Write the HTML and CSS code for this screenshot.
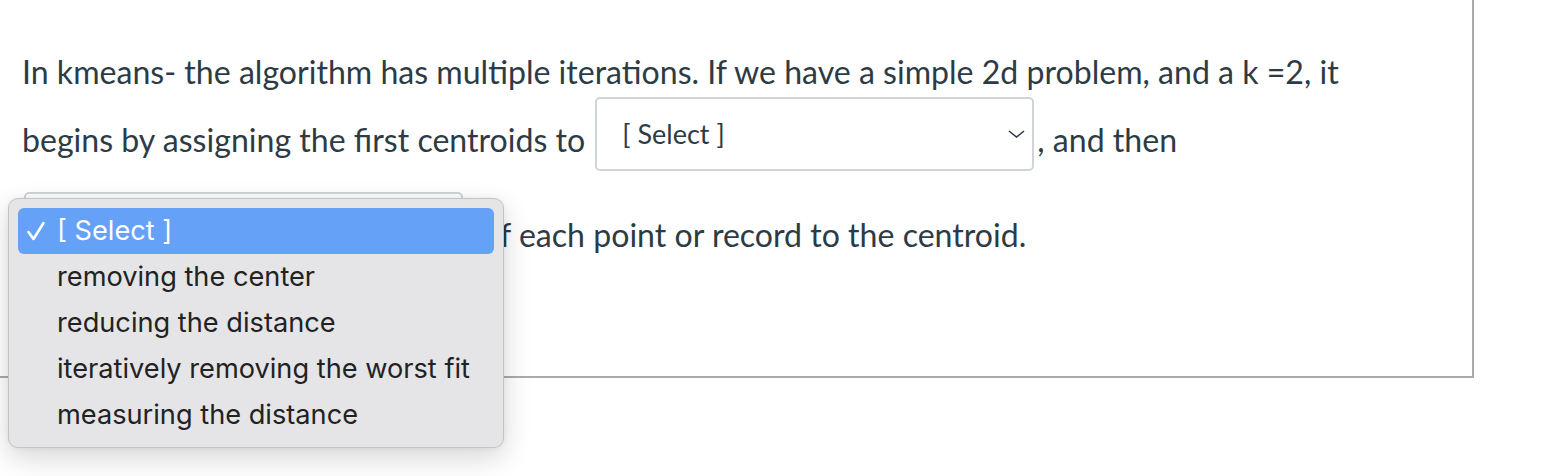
FILE: index.html
```html
<!DOCTYPE html>
<html lang="en">
<head>
<meta charset="utf-8">
<title>Quiz question</title>
<link rel="stylesheet" href="styles.css">
</head>
<body>
<div class="page">
  <div class="panel">
    <p class="question">In kmeans- the algorithm has multiple iterations. If we have a simple 2d problem, and a k =2, it begins by assigning the first centroids to <span class="select"><span class="select-inner"><span class="select-value">[ Select ]</span><svg class="chevron" viewBox="0 0 17 8" width="17" height="8"><polyline points="1,1 8.5,7 16,1" fill="none" stroke="#2d3b45" stroke-width="1.6"/></svg></span></span>, and then <span class="select select-open"><span class="select-inner"><span class="select-value">[ Select ]</span><svg class="chevron" viewBox="0 0 17 8" width="17" height="8"><polyline points="1,1 8.5,7 16,1" fill="none" stroke="#2d3b45" stroke-width="1.6"/></svg></span></span> of each point or record to the centroid.</p>
  </div>
  <div class="popup">
    <div class="option option-selected"><span class="check"><svg viewBox="0 0 18 20" width="18" height="20"><polyline points="1.5,11 6.5,18 16.5,2" fill="none" stroke="#ffffff" stroke-width="2.6" stroke-linecap="round" stroke-linejoin="round"/></svg></span><span class="option-label">[ Select ]</span></div>
    <div class="option"><span class="check"></span><span class="option-label">removing the center</span></div>
    <div class="option"><span class="check"></span><span class="option-label">reducing the distance</span></div>
    <div class="option"><span class="check"></span><span class="option-label">iteratively removing the worst fit</span></div>
    <div class="option"><span class="check"></span><span class="option-label">measuring the distance</span></div>
  </div>
</div>
</body>
</html>
```
FILE: styles.css
```css
* { box-sizing: border-box; }

body {
  margin: 0;
  background: #ffffff;
  font-family: "Lato", "Liberation Sans", sans-serif;
  color: #2d3b45;
}

.page {
  position: relative;
  width: 1560px;
  height: 476px;
  overflow: hidden;
}

.panel {
  width: 1474px;
  height: 378px;
  border-right: 2px solid #aaaaaa;
  border-bottom: 2px solid #aaaaaa;
}

.question {
  margin: 0;
  padding: 48px 72px 0 22px;
  font-size: 32.1px;
  line-height: 1.5;
}

.select {
  display: inline-block;
  width: 439px;
  height: 74px;
  margin: 1px 3px 20px 2px;
  vertical-align: -39px;
  border: 2px solid #d0d4d7;
  border-radius: 5px;
  overflow: hidden;
  background: #ffffff;
}

.select-open { margin-right: 11px; }

.select-inner {
  display: flex;
  align-items: center;
  justify-content: space-between;
  height: 100%;
  padding: 0 7px 0 25px;
}

.select-value {
  font-size: 27px;
  line-height: 32px;
}

.chevron { display: block; }

.popup {
  position: absolute;
  left: 8px;
  top: 198px;
  width: 496px;
  height: 250px;
  padding: 9px;
  background: #e5e5e7;
  border: 1px solid #c4c4c6;
  border-radius: 10px;
  box-shadow: 0 10px 28px rgba(0, 0, 0, 0.16), 0 0 6px rgba(0, 0, 0, 0.06);
  font-family: "Inter", "Noto Sans", sans-serif;
  color: #222222;
}

.option {
  display: flex;
  align-items: center;
  height: 46px;
  padding-left: 9px;
  border-radius: 6px;
}

.option-selected {
  background: #64a1f7;
  color: #ffffff;
}

.check {
  display: flex;
  align-items: center;
  width: 30px;
  height: 20px;
}

.check svg { display: block; }

.option-label {
  font-size: 27.2px;
  line-height: 32px;
  white-space: nowrap;
}
```
